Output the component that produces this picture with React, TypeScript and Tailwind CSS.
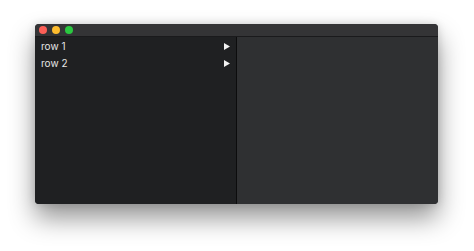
import React from 'react';

const rows = ['row 1', 'row 2'];

export default function App() {
  return (
    <div className="w-[474px] h-[251px] bg-white overflow-hidden pt-[24px] pl-[35px]" style={{ fontFamily: 'Inter, "Liberation Sans", sans-serif' }}>
      <div className="w-[403px] h-[180px] rounded-[4px] overflow-hidden flex flex-col bg-[#2f3032] shadow-[0_14px_26px_rgba(0,0,0,0.42),0_0_8px_rgba(0,0,0,0.15)]">
        {/* title bar */}
        <div className="h-[13px] shrink-0 bg-[#343436] border-b border-[#1a1a1c] flex items-center gap-[5px] pl-[4px]">
          <span className="w-[8px] h-[8px] rounded-full bg-[#fc5f57]" />
          <span className="w-[8px] h-[8px] rounded-full bg-[#fdbc2e]" />
          <span className="w-[8px] h-[8px] rounded-full bg-[#2ac840]" />
        </div>
        <div className="flex flex-1 min-h-0">
          <div className="w-[202px] bg-[#1f2022] border-r border-[#0c0c0d] pt-[1px]">
            {rows.map((r) => (
              <div key={r} className="h-[17px] flex items-center justify-between pl-[6px] pr-[6px] text-[10px] text-[#e6e6e6]">
                <span>{r}</span>
                <svg width="6" height="7" viewBox="0 0 6 7">
                  <path d="M0 0 L6 3.5 L0 7 Z" fill="#f2f2f2" />
                </svg>
              </div>
            ))}
          </div>
          <div className="flex-1 bg-[#2f3032]" />
        </div>
      </div>
    </div>
  );
}
